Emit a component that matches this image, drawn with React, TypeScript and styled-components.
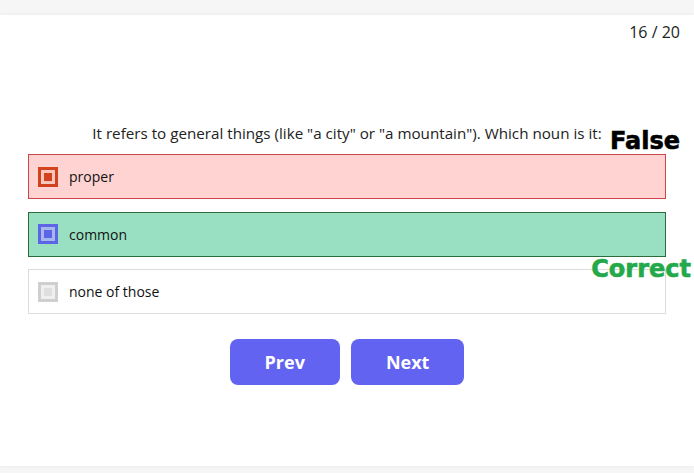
import React from 'react'
import styled, { createGlobalStyle } from 'styled-components'

type Status = 'wrong' | 'right' | 'idle'

const options: { label: string; status: Status; verdict?: string }[] = [
  { label: 'proper', status: 'wrong', verdict: 'False' },
  { label: 'common', status: 'right', verdict: 'Correct' },
  { label: 'none of those', status: 'idle' },
]

const palette = {
  wrong: { bg: '#ffd3d1', border: '#c9474a', mark: '#d1431f', inner: '#f7c6bd', dot: '#d1431f' },
  right: { bg: '#99e0c2', border: '#2b6b3c', mark: '#5c66e4', inner: '#a9b5ef', dot: '#5c66e4' },
  idle: { bg: '#ffffff', border: '#dcdcdc', mark: '#cfcfcf', inner: '#efefef', dot: '#dedede' },
}

export default function App() {
  return (
    <>
      <GlobalStyle />
      <Page>
        <Card>
          <Counter>16 / 20</Counter>
          <QuizBody>
            <Question>
              It refers to general things (like "a city" or "a mountain"). Which noun is it:
            </Question>
            <OptionList>
              {options.map((opt) => (
                <OptionRow key={opt.label} $status={opt.status}>
                  <CheckBox $status={opt.status}>
                    <CheckDot $status={opt.status} />
                  </CheckBox>
                  <OptionLabel>{opt.label}</OptionLabel>
                  {opt.verdict && <Verdict $status={opt.status}>{opt.verdict}</Verdict>}
                </OptionRow>
              ))}
            </OptionList>
            <ButtonRow>
              <NavButton>Prev</NavButton>
              <NavButton>Next</NavButton>
            </ButtonRow>
          </QuizBody>
        </Card>
      </Page>
    </>
  )
}

const GlobalStyle = createGlobalStyle`
  html, body {
    margin: 0;
    padding: 0;
    background: #f6f6f6;
  }
  body {
    font-family: 'Open Sans', 'Noto Sans', sans-serif;
    color: #1a1a1a;
  }
`

const Page = styled.div`
  width: 694px;
  height: 473px;
  padding-top: 15px;
  box-sizing: border-box;
`

const Card = styled.div`
  height: 451px;
  background: #ffffff;
  box-shadow: 0 0 5px rgba(0, 0, 0, 0.06);
  padding: 6px 14px 0 28px;
  box-sizing: border-box;
  display: flex;
  flex-direction: column;
`

const Counter = styled.div`
  align-self: flex-end;
  font-size: 16px;
  line-height: 22px;
  color: #222;
`

const QuizBody = styled.div`
  width: 638px;
  margin-top: 79px;
  display: flex;
  flex-direction: column;
`

const Question = styled.div`
  text-align: center;
  font-size: 15.2px;
  line-height: 22px;
  color: #222;
  margin-bottom: 10px;
`

const OptionList = styled.div`
  display: flex;
  flex-direction: column;
  gap: 12.5px;
`

const OptionRow = styled.div<{ $status: Status }>`
  position: relative;
  height: 45px;
  box-sizing: border-box;
  display: flex;
  align-items: center;
  gap: 11px;
  padding-left: 9px;
  background: ${(p) => palette[p.$status].bg};
  border: 1px solid ${(p) => palette[p.$status].border};
`

const CheckBox = styled.div<{ $status: Status }>`
  width: 20px;
  height: 20px;
  box-sizing: border-box;
  border: 3px solid ${(p) => palette[p.$status].mark};
  background: ${(p) => palette[p.$status].inner};
  display: flex;
  align-items: center;
  justify-content: center;
`

const CheckDot = styled.div<{ $status: Status }>`
  width: 8px;
  height: 8px;
  background: ${(p) => palette[p.$status].dot};
`

const OptionLabel = styled.span`
  font-size: 14px;
  color: #111;
`

const Verdict = styled.span<{ $status: Status }>`
  position: absolute;
  z-index: 1;
  font-family: 'DejaVu Sans', sans-serif;
  font-weight: 700;
  font-size: 24px;
  line-height: 24px;
  -webkit-text-stroke: 0.6px currentColor;
  color: ${(p) => (p.$status === 'right' ? '#24a94a' : '#000')};
  ${(p) =>
    p.$status === 'right'
      ? 'top: 100%; margin-top: 1px; right: -26px;'
      : 'bottom: 100%; margin-bottom: 2px; right: -15px;'}
`

const ButtonRow = styled.div`
  display: flex;
  justify-content: center;
  gap: 11px;
  margin-top: 25px;
`

const NavButton = styled.button`
  height: 46px;
  padding: 0 35px;
  border: none;
  border-radius: 8px;
  background: #6363f1;
  color: #fff;
  font-family: 'Open Sans', sans-serif;
  font-weight: 700;
  font-size: 18px;
  cursor: pointer;
`
